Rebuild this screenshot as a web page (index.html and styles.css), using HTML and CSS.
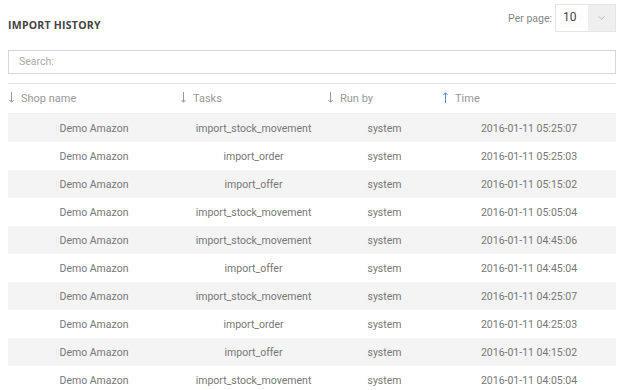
FILE: index.html
```html
<!DOCTYPE html>
<html>
<head>
<meta charset="utf-8">
<link rel="stylesheet" href="styles.css">
</head>
<body>
<div class="page">
  <div class="topbar">
    <h1 class="title">IMPORT HISTORY</h1>
    <div class="perpage">
      <span class="pp-label">Per page:</span>
      <div class="select">
        <span class="sel-value">10</span>
        <span class="sel-btn"><svg width="7" height="4" viewBox="0 0 7 4"><path d="M0.5 0.5 L3.5 3.2 L6.5 0.5" fill="none" stroke="#aaa" stroke-width="0.8"/></svg></span>
      </div>
    </div>
  </div>
  <div class="search">Search:</div>
  <table class="grid">
    <colgroup>
      <col class="c1"><col class="c2"><col class="c3"><col class="c4">
    </colgroup>
    <thead>
      <tr>
        <th><span class="arr"><svg width="7" height="11" viewBox="0 0 7 11"><path d="M3.5 0 V10 M1.5 8 L3.5 10.3 L5.5 8" fill="none" stroke="#999" stroke-width="1"/></svg></span>Shop name</th>
        <th><span class="arr"><svg width="7" height="11" viewBox="0 0 7 11"><path d="M3.5 0 V10 M1.5 8 L3.5 10.3 L5.5 8" fill="none" stroke="#999" stroke-width="1"/></svg></span>Tasks</th>
        <th><span class="arr"><svg width="7" height="11" viewBox="0 0 7 11"><path d="M3.5 0 V10 M1.5 8 L3.5 10.3 L5.5 8" fill="none" stroke="#999" stroke-width="1"/></svg></span>Run by</th>
        <th><span class="arr"><svg width="7" height="11" viewBox="0 0 7 11"><path d="M3.5 11 V1 M1.5 3 L3.5 0.7 L5.5 3" fill="none" stroke="#4a90e2" stroke-width="1"/></svg></span>Time</th>
      </tr>
    </thead>
    <tbody>
      <tr><td>Demo Amazon</td><td>import_stock_movement</td><td>system</td><td>2016-01-11 05:25:07</td></tr>
      <tr><td>Demo Amazon</td><td>import_order</td><td>system</td><td>2016-01-11 05:25:03</td></tr>
      <tr><td>Demo Amazon</td><td>import_offer</td><td>system</td><td>2016-01-11 05:15:02</td></tr>
      <tr><td>Demo Amazon</td><td>import_stock_movement</td><td>system</td><td>2016-01-11 05:05:04</td></tr>
      <tr><td>Demo Amazon</td><td>import_stock_movement</td><td>system</td><td>2016-01-11 04:45:06</td></tr>
      <tr><td>Demo Amazon</td><td>import_offer</td><td>system</td><td>2016-01-11 04:45:04</td></tr>
      <tr><td>Demo Amazon</td><td>import_stock_movement</td><td>system</td><td>2016-01-11 04:25:07</td></tr>
      <tr><td>Demo Amazon</td><td>import_order</td><td>system</td><td>2016-01-11 04:25:03</td></tr>
      <tr><td>Demo Amazon</td><td>import_offer</td><td>system</td><td>2016-01-11 04:15:02</td></tr>
      <tr><td>Demo Amazon</td><td>import_stock_movement</td><td>system</td><td>2016-01-11 04:05:04</td></tr>
    </tbody>
  </table>
</div>
</body>
</html>
```
FILE: styles.css
```css
html, body { margin: 0; padding: 0; background: #fff; }
body { font-family: Roboto, "Liberation Sans", sans-serif; color: #777; font-size: 10.5px; overflow: hidden; }
.page { padding: 4px 8px 0 8px; }
.topbar { display: flex; justify-content: space-between; align-items: flex-start; height: 46px; }
.title { margin: 14px 0 0 0; font-family: "Open Sans", "Liberation Sans", sans-serif; font-weight: 700; font-size: 10.5px; color: #444; letter-spacing: 0.25px; }
.perpage { display: flex; align-items: center; }
.pp-label { color: #888; font-size: 10.5px; margin-right: 3px; }
.select { display: flex; width: 61px; height: 28px; border: 1px solid #e6e6e6; box-sizing: border-box; }
.sel-value { flex: 1; color: #444; font-size: 12px; padding-left: 7px; line-height: 25px; }
.sel-btn { width: 27px; background: #efefef; display: flex; align-items: center; justify-content: center; }
.search { height: 24px; border: 1px solid #d6d6d6; box-sizing: border-box; padding-left: 10px; line-height: 22px; color: #aaa; font-size: 10.5px; }
.grid { width: 608px; border-collapse: collapse; table-layout: fixed; margin-top: 9px; border-top: 1px solid #e4e4e4; }
.c1 { width: 172px; } .c2 { width: 147px; } .c3 { width: 115px; } .c4 { width: 174px; }
th { height: 29px; text-align: left; font-weight: 400; color: #999; font-size: 11px; padding: 0; border-bottom: 1px solid #f0f0f0; }
.arr { display: inline-block; width: 13px; vertical-align: -1px; }
.arr svg { display: block; }
td { height: 28px; padding: 0; text-align: center; color: #777; font-size: 10.5px; }
tbody tr:nth-child(odd) td { background: #f4f4f4; }
```
